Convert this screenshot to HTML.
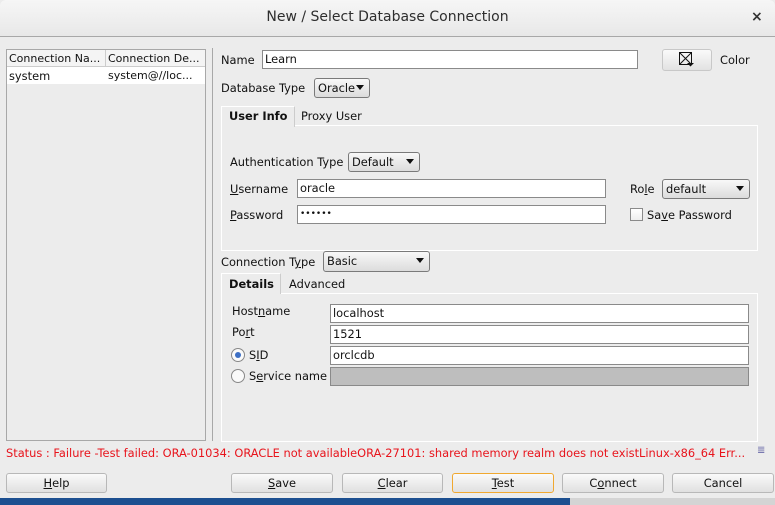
<!DOCTYPE html><html><head><style>
*{box-sizing:border-box;margin:0;padding:0}
body{width:775px;height:505px;overflow:hidden;background:#ececec;font-family:"DejaVu Sans","Liberation Sans",sans-serif;font-size:11.4px;color:#111;position:relative}
.a{position:absolute;white-space:nowrap}
.in{position:absolute;background:#fff;border:1px solid #8a8a8a;padding-left:2px;line-height:17px}
.cb{position:absolute;border:1px solid #7a7a7a;border-radius:3px;background:linear-gradient(#f8f8f8,#dcdcdc);padding-left:3px;line-height:18px}
.cb:after{content:"";position:absolute;right:5px;top:6px;border-left:4px solid transparent;border-right:4px solid transparent;border-top:5px solid #111}
.btn{position:absolute;top:473px;height:20px;border:1px solid #b8b8b8;border-radius:3px;background:linear-gradient(#fafafa,#e0e0e0);text-align:center;line-height:18px}
.panel{position:absolute;border:1px solid #fff;border-top-color:#fff}
u{text-decoration:underline}
</style></head><body>
<div class="a" style="left:0;top:0;width:775px;height:37px;background:linear-gradient(#f6f6f6,#e8e8e8);border-bottom:1px solid #a8a8a8;border-radius:6px 6px 0 0"></div>
<div class="a" style="left:0;top:9px;width:775px;text-align:center;font-size:14px;color:#2e2e2e">New / Select Database Connection</div>
<div class="a" style="left:751px;top:9px;font-size:14px;font-weight:bold;color:#333">×</div>

<div class="a" style="left:6px;top:49px;width:200px;height:392px;background:#ececec;border:1px solid #a8a8a8"></div>
<div class="a" style="left:7px;top:50px;width:198px;height:17px;background:#f4f4f4;border-bottom:1px solid #ccc"></div>
<div class="a" style="left:105px;top:50px;width:1px;height:34px;background:#ccc"></div>
<div class="a" style="left:7px;top:67px;width:198px;height:17px;background:#fff"></div>
<div class="a" style="left:9px;top:52px;font-size:11px">Connection Na...</div>
<div class="a" style="left:108px;top:52px;font-size:11px">Connection De...</div>
<div class="a" style="left:9px;top:69px">system</div>
<div class="a" style="left:108px;top:69px;font-size:11px">system@//loc...</div>
<div class="a" style="left:212px;top:48px;width:1px;height:393px;background:#a8a8a8"></div>

<div class="a" style="left:221px;top:53px">Name</div>
<div class="in" style="left:262px;top:50px;width:376px;height:19px">Learn</div>
<div class="a" style="left:662px;top:49px;width:50px;height:22px;border:1px solid #c8c8c8;border-radius:3px;background:linear-gradient(#fafafa,#e2e2e2)"></div>
<svg class="a" style="left:678px;top:51px" width="18" height="16"><rect x="1.5" y="1.5" width="12" height="12" fill="none" stroke="#111"/><path d="M1.5 1.5L13.5 13.5M13.5 1.5L1.5 13.5" stroke="#111"/><path d="M9 12h7l-3.5 3.5z" fill="#111"/></svg>
<div class="a" style="left:720px;top:53px">Color</div>
<div class="a" style="left:221px;top:81px">Database Type</div>
<div class="cb" style="left:314px;top:78px;width:56px;height:20px">Oracle</div>

<div class="panel" style="left:221px;top:125px;width:537px;height:126px"></div>
<div class="a" style="left:221px;top:106px;width:74px;height:21px;background:#ececec;border:1px solid #fff;border-bottom:none;border-right-color:#ccc"></div>
<div class="a" style="left:229px;top:109px;font-weight:bold">User Info</div>
<div class="a" style="left:301px;top:109px">Proxy User</div>

<div class="a" style="left:230px;top:155px">Authentication Type</div>
<div class="cb" style="left:348px;top:152px;width:72px;height:20px">Default</div>
<div class="a" style="left:230px;top:182px"><u>U</u>sername</div>
<div class="in" style="left:297px;top:179px;width:309px;height:19px">oracle</div>
<div class="a" style="left:630px;top:182px">Ro<u>l</u>e</div>
<div class="cb" style="left:662px;top:179px;width:88px;height:20px">default</div>
<div class="a" style="left:230px;top:208px"><u>P</u>assword</div>
<div class="in" style="left:297px;top:205px;width:309px;height:19px;font-size:9px">••••••</div>
<div class="a" style="left:630px;top:208px;width:13px;height:13px;border:1px solid #8a8a8a;background:linear-gradient(#fff,#eee)"></div>
<div class="a" style="left:647px;top:208px">Sa<u>v</u>e Password</div>

<div class="a" style="left:221px;top:255px">Connection T<u>y</u>pe</div>
<div class="cb" style="left:323px;top:251px;width:107px;height:21px">Basic</div>

<div class="panel" style="left:221px;top:293px;width:537px;height:149px"></div>
<div class="a" style="left:221px;top:273px;width:60px;height:21px;background:#ececec;border:1px solid #fff;border-bottom:none;border-right-color:#ccc"></div>
<div class="a" style="left:229px;top:277px;font-weight:bold">Details</div>
<div class="a" style="left:289px;top:277px">Advanced</div>

<div class="a" style="left:232px;top:304px">Host<u>n</u>ame</div>
<div class="in" style="left:330px;top:304px;width:419px;height:19px">localhost</div>
<div class="a" style="left:232px;top:325px">Po<u>r</u>t</div>
<div class="in" style="left:330px;top:325px;width:419px;height:19px">1521</div>
<div class="a" style="left:231px;top:348px;width:14px;height:14px;border:1px solid #888;border-radius:50%;background:#fafafa"></div>
<div class="a" style="left:235px;top:352px;width:6px;height:6px;border-radius:50%;background:#3d6fc4"></div>
<div class="a" style="left:249px;top:348px">S<u>I</u>D</div>
<div class="in" style="left:330px;top:346px;width:419px;height:19px">orclcdb</div>
<div class="a" style="left:231px;top:369px;width:14px;height:14px;border:1px solid #888;border-radius:50%;background:#fafafa"></div>
<div class="a" style="left:249px;top:369px">S<u>e</u>rvice name</div>
<div class="in" style="left:330px;top:367px;width:419px;height:19px;background:#bebebe"></div>

<div class="a" style="left:6px;top:446px;color:#e8141c;font-size:11.4px">Status : Failure -Test failed: ORA-01034: ORACLE not availableORA-27101: shared memory realm does not existLinux-x86_64 Err...</div>
<div class="a" style="left:757px;top:445px;color:#6a6aa8;font-size:10px">≣</div>

<div class="btn" style="left:6px;width:101px"><u>H</u>elp</div>
<div class="btn" style="left:231px;width:102px"><u>S</u>ave</div>
<div class="btn" style="left:342px;width:101px"><u>C</u>lear</div>
<div class="btn" style="left:452px;width:102px;border-color:#f0a830"><u>T</u>est</div>
<div class="btn" style="left:562px;width:102px">C<u>o</u>nnect</div>
<div class="btn" style="left:672px;width:102px">Cancel</div>

<div class="a" style="left:0;top:498px;width:570px;height:7px;background:#1c4f90"></div>
<div class="a" style="left:570px;top:498px;width:205px;height:7px;background:#d4d4d4"></div>
</body></html>
